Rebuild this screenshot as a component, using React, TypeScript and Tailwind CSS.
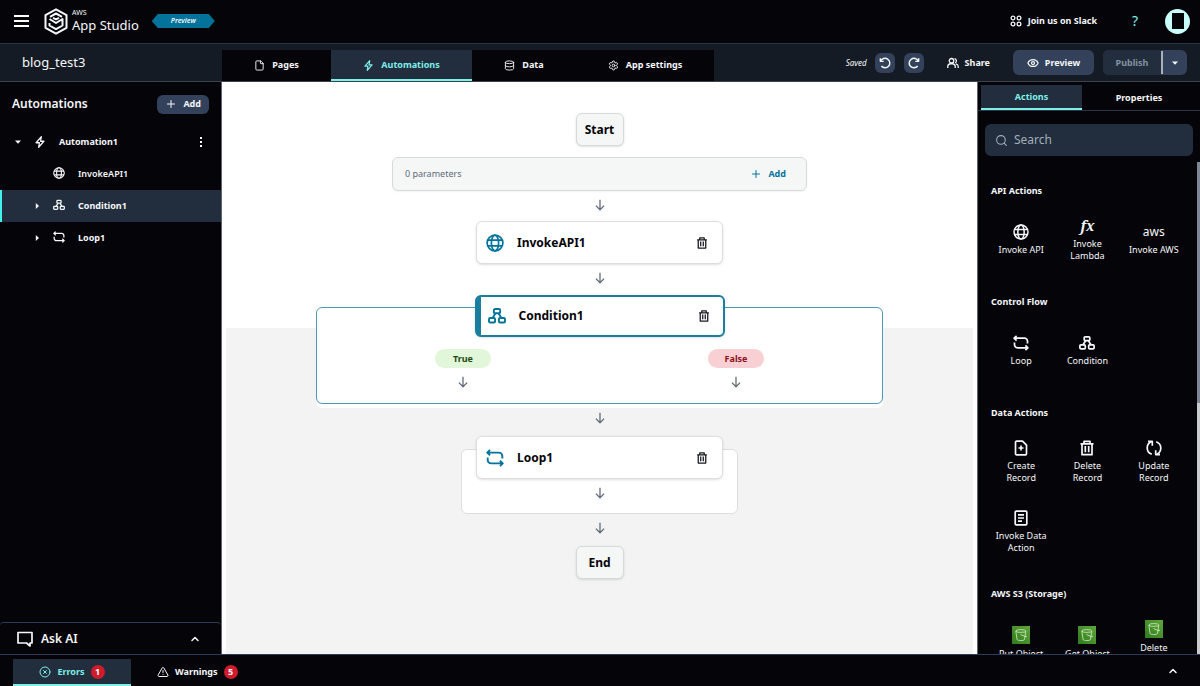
import type { ReactNode } from "react"
import { ChevronUp, CircleX, Database, Eye, File, Plus, Search, Settings, TriangleAlert, Zap } from "lucide-react"

type IconProps = { className?: string }

function Svg({ className = "size-4", width = 1.7, children }: IconProps & { width?: number; children: ReactNode }) {
  return (
    <svg
      viewBox="0 0 16 16"
      fill="none"
      stroke="currentColor"
      strokeWidth={width}
      strokeLinejoin="round"
      className={`shrink-0 ${className}`}
      aria-hidden="true"
    >
      {children}
    </svg>
  )
}

const GlobeIcon = ({ className }: IconProps) => (
  <Svg className={className} width={1.5}>
    <circle cx="8" cy="8" r="7" />
    <ellipse cx="8" cy="8" rx="3.2" ry="7" />
    <path d="M1.5 5.5h13M1.5 10.5h13" />
  </Svg>
)

const ConditionIcon = ({ className }: IconProps) => (
  <Svg className={className}>
    <rect x="5.2" y="1.8" width="5.6" height="3.8" rx="1" />
    <rect x="0.9" y="9.8" width="5.4" height="4" rx="1" />
    <rect x="9.7" y="9.8" width="5.4" height="4" rx="1" />
    <path d="M6.6 5.8 4 9.8M9.4 5.8 12 9.8" />
  </Svg>
)

const LoopIcon = ({ className }: IconProps) => (
  <Svg className={className}>
    <path d="M1 3.2h10.500a3 3 0 0 1 3 3v2.300M3.600.800 1.100 3.200l2.500 2.400" />
    <path d="M1.500 7.500v2.300a3 3 0 0 0 3 3H15M12.400 10.400l2.500 2.400-2.500 2.400" />
  </Svg>
)

const TrashIcon = ({ className }: IconProps) => (
  <Svg className={className}>
    <path d="M1.500 3.800h13M5 3.500V1.300h6v2.200M3 3.800v10.900h10V3.800M6.300 6v6.200M9.700 6v6.200" />
  </Svg>
)

const CreateIcon = ({ className }: IconProps) => (
  <Svg className={className}>
    <path d="M2.500 2.200a1 1 0 0 1 1-1h6l4 4v8.600a1 1 0 0 1-1 1h-9a1 1 0 0 1-1-1zM8 5.500v5M5.500 8h5" />
  </Svg>
)

const UpdateIcon = ({ className }: IconProps) => (
  <Svg className={className}>
    <path d="M5.800 14.300C3 13.300 1.200 11 1.200 8c0-2.600 1.300-4.900 3.800-6.200M2 1.400h4.300v4.300" />
    <path d="M10.200 1.700C13 2.700 14.800 5 14.800 8c0 2.600-1.300 4.900-3.800 6.200M14 14.600H9.700v-4.300" />
  </Svg>
)

const DocumentIcon = ({ className }: IconProps) => (
  <Svg className={className}>
    <rect x="2.2" y="1.2" width="11.6" height="13.6" rx="1" />
    <path d="M5 4.800h6M5 8h6M5 11.200h4" />
  </Svg>
)

const UsersIcon = ({ className }: IconProps) => (
  <Svg className={className}>
    <circle cx="6" cy="5" r="3" />
    <path d="M1 14.500v-1.500a4 4 0 0 1 4-4h2a4 4 0 0 1 4 4v1.500M10 2.200a3 3 0 0 1 .800 5.700M12 9.200a4 4 0 0 1 3 3.800v1.500" />
  </Svg>
)

const SlackIcon = ({ className }: IconProps) => (
  <Svg className={className}>
    <circle cx="4" cy="4" r="2.5" />
    <circle cx="12" cy="4" r="2.5" />
    <circle cx="4" cy="12" r="2.5" />
    <circle cx="12" cy="12" r="2.5" />
  </Svg>
)

const UndoIcon = ({ className }: IconProps) => (
  <Svg className={className} width={1.9}>
    <path d="M1.800 1.500v4.300h4.500M2.300 5.600A6.300 6.300 0 1 1 3.200 12" />
  </Svg>
)

const BoltIcon = ({ className }: IconProps) => (
  <Svg className={className}>
    <path d="M9.800 1 2.800 9h4.400L6.200 15l7-8H8.800z" />
  </Svg>
)

const ChatIcon = ({ className }: IconProps) => (
  <Svg className={className}>
    <path d="M1 1.500h14v10.500h-2v3l-3.500-3H1z" />
  </Svg>
)

const BucketIcon = () => (
  <svg viewBox="0 0 18 18" fill="none" stroke="#d6ecc4" strokeWidth="0.8" className="size-[18px] bg-linear-to-tr from-[#2f7a1c] to-[#5fa83c]" aria-hidden="true">
    <ellipse cx="8.8" cy="5" rx="5" ry="1.4" />
    <path d="M3.800 5l1.300 8.500c.3 1.400 7.100 1.400 7.400 0L13.800 5M8.500 8.500l4.500 2c1.500.6 2.200.1.800-.9" />
  </svg>
)

const FxIcon = () => (
  <span className="font-['Noto_Serif','Liberation_Serif',serif] text-sm leading-4 font-bold italic">fx</span>
)

const AwsIcon = () => <span className="text-xs leading-4">aws</span>

const LogoIcon = () => (
  <svg viewBox="0 0 24 27" fill="none" stroke="currentColor" strokeWidth="2" strokeLinejoin="round" className="h-[27px] w-6" aria-hidden="true">
    <path d="M12 1.300 22.500 7.200v12.600L12 25.700 1.500 19.800V7.200z" />
    <path d="M6 8.800 12 5.500l6 3.300M9 9.800l3 1.500 3-1.500" />
    <path d="M5.500 11l6.500 4 6.500-4v6.500L12 21.200l-6.500-3.700v-2.500" />
  </svg>
)

const Caret = ({ open }: { open?: boolean }) => (
  <svg viewBox="0 0 12 12" fill="currentColor" className="size-3 shrink-0" aria-hidden="true">
    {open ? <path d="M3 4.500h6L6 7.800z" /> : <path d="M4.800 3v6L8 6z" />}
  </svg>
)

function Arrow({ className = "h-8" }: IconProps) {
  return (
    <div className={`flex justify-center pt-2 text-[#5f6b7a] ${className}`}>
      <Svg className="size-3">
        <path d="M8 1v13M2.500 8.800 8 14.300l5.500-5.500" />
      </Svg>
    </div>
  )
}

const tabs = [
  { icon: File, label: "Pages", size: "w-[109px]" },
  { icon: BoltIcon, label: "Automations", size: "w-[141px]", active: true },
  { icon: Database, label: "Data", size: "w-[104px]" },
  { icon: Settings, label: "App settings", size: "w-[138px]" },
]

const tree = [
  { label: "InvokeAPI1", icon: GlobeIcon },
  { label: "Condition1", icon: ConditionIcon, expandable: true, selected: true },
  { label: "Loop1", icon: LoopIcon, expandable: true },
]

const sections = [
  {
    title: "API Actions",
    items: [
      { label: "Invoke API", icon: GlobeIcon },
      { label: "Invoke Lambda", icon: FxIcon },
      { label: "Invoke AWS", icon: AwsIcon },
    ],
  },
  {
    title: "Control Flow",
    items: [
      { label: "Loop", icon: LoopIcon },
      { label: "Condition", icon: ConditionIcon },
    ],
  },
  {
    title: "Data Actions",
    items: [
      { label: "Create Record", icon: CreateIcon },
      { label: "Delete Record", icon: TrashIcon },
      { label: "Update Record", icon: UpdateIcon },
      { label: "Invoke Data Action", icon: DocumentIcon },
    ],
  },
  {
    title: "AWS S3 (Storage)",
    items: [
      { label: "Put Object", icon: BucketIcon },
      { label: "Get Object", icon: BucketIcon },
      { label: "Delete Object", icon: BucketIcon },
    ],
  },
]

function Header() {
  return (
    <header className="flex h-11 shrink-0 items-center border-b border-[#2a3646] pr-[10px] pb-px pl-[14px]">
      <button aria-label="Menu" className="flex w-[15px] flex-col gap-[3px]">
        <span className="h-[2px] bg-white" />
        <span className="h-[2px] bg-white" />
        <span className="h-[2px] bg-white" />
      </button>
      <a href="#" className="ml-[15px] flex items-center gap-1">
        <LogoIcon />
        <span className="flex flex-col">
          <span className="text-[7px] leading-2">AWS</span>
          <span className="text-[13px] leading-[17px]">App Studio</span>
        </span>
      </a>
      <span className="ml-[13px] flex h-[14px] w-[63px] items-center justify-center bg-[#04739b] text-[7px] font-semibold italic [clip-path:polygon(6px_0,calc(100%-6px)_0,100%_50%,calc(100%-6px)_100%,6px_100%,0_50%)]">
        Preview
      </span>
      <a href="#" className="ml-auto flex items-center gap-[6px] font-bold">
        <SlackIcon className="size-3" />
        Join us on Slack
      </a>
      <button aria-label="Help" className="ml-8 w-3 text-sm text-[#7df0ea]">
        ?
      </button>
      <button aria-label="Account" className="ml-6 flex size-[25px] items-center justify-center rounded-full bg-[#c8fffb]">
        <span className="h-4 w-3 bg-[#050509]" />
      </button>
    </header>
  )
}

function Toolbar() {
  return (
    <div className="flex h-[38px] shrink-0 items-center border-b border-[#3b434d] bg-[#151b24] pr-[13px]">
      <h1 className="w-[222px] pl-[22px] text-[13px]">blog_test3</h1>
      <nav className="flex self-end">
        {tabs.map((tab) => (
          <button
            key={tab.label}
            className={`flex h-[31px] items-center justify-center gap-[7px] border-b-2 pt-px font-bold ${tab.size} ${
              tab.active ? "border-[#7df0ea] bg-[#222e3d] text-[#7df0ea]" : "border-[#050509] bg-[#050509]"
            }`}
          >
            <tab.icon className="size-[11px]" />
            {tab.label}
          </button>
        ))}
      </nav>
      <span className="ml-auto text-[8px] italic">Saved</span>
      <button aria-label="Undo" className="ml-2 flex size-5 items-center justify-center rounded-md bg-[#33425a]">
        <UndoIcon className="size-3" />
      </button>
      <button aria-label="Redo" className="ml-[9px] flex size-5 items-center justify-center rounded-md bg-[#33425a]">
        <UndoIcon className="size-3 -scale-x-100" />
      </button>
      <button className="ml-[23px] flex items-center gap-[6px] font-bold">
        <UsersIcon className="size-3" />
        Share
      </button>
      <button className="ml-[23px] flex h-[25px] w-[81px] items-center justify-center gap-[6px] rounded-md bg-[#33425a] font-bold">
        <Eye className="size-3" strokeWidth={2.5} />
        Preview
      </button>
      <div className="ml-[9px] flex h-[25px] overflow-hidden rounded-md bg-[#33425a]">
        <button className="w-[58px] bg-[#222e3d] font-bold text-[#8391a2]">Publish</button>
        <span className="my-px w-[2px] bg-[#a9b0b8]" />
        <button aria-label="Publish options" className="flex w-6 items-center justify-center">
          <Caret open />
        </button>
      </div>
    </div>
  )
}

function Sidebar() {
  return (
    <aside className="flex w-[222px] shrink-0 flex-col border-r border-[#5f6570]">
      <div className="flex h-11 items-center justify-between pr-3 pl-3">
        <h2 className="text-xs font-semibold">Automations</h2>
        <button className="flex h-[19px] items-center gap-[6px] rounded-md bg-[#33425a] px-2 font-bold">
          <Plus className="size-3" />
          Add
        </button>
      </div>
      <div className="flex h-8 items-center pr-[15px] pl-3">
        <Caret open />
        <BoltIcon className="ml-[10px] size-3" />
        <span className="ml-[13px] font-bold">Automation1</span>
        <button aria-label="More" className="ml-auto flex w-[10px] flex-col items-center gap-[2px]">
          <span className="size-[2px] bg-white" />
          <span className="size-[2px] bg-white" />
          <span className="size-[2px] bg-white" />
        </button>
      </div>
      {tree.map((node) => (
        <div
          key={node.label}
          className={`flex h-8 items-center border-l-2 pl-[29px] ${
            node.selected ? "border-[#42f2ea] bg-[#222e3d]" : "border-transparent"
          } ${node.expandable ? "font-bold" : "font-semibold"}`}
        >
          <span className="size-3">{node.expandable && <Caret />}</span>
          <node.icon className="mb-[2px] ml-[10px] size-3" />
          <span className="ml-[13px]">{node.label}</span>
        </div>
      ))}
      <button className="mt-auto flex h-8 items-center gap-2 rounded-t border-t border-[#2a3f57] pr-5 pl-[17px] text-xs font-semibold">
        <ChatIcon className="size-4" />
        Ask AI
        <ChevronUp className="ml-auto size-3" strokeWidth={3} />
      </button>
    </aside>
  )
}

function StepCard({ icon: Icon, label, selected }: { icon: (p: IconProps) => ReactNode; label: string; selected?: boolean }) {
  return (
    <div
      className={`flex items-center rounded-md bg-white text-xs font-bold shadow-sm ${
        selected
          ? "h-[42px] w-[250px] border-2 border-l-6 border-[#1a7f9f] pr-[13px] pl-[7px]"
          : "h-[43px] w-[247px] border border-[#dcdfe1] pr-[14px] pl-[9px]"
      }`}
    >
      <Icon className="size-[18px] text-[#04739b]" />
      <span className="ml-[13px]">{label}</span>
      <button aria-label={`Delete ${label}`} className="ml-auto text-[#16191f]">
        <TrashIcon className="size-3" />
      </button>
    </div>
  )
}

function Terminal({ label }: { label: string }) {
  return (
    <div className="flex h-[33px] w-12 items-center justify-center rounded-md border border-[#d5dbdb] bg-[#f5f7f7] text-xs font-bold shadow">
      {label}
    </div>
  )
}

function Canvas() {
  return (
    <main className="min-w-0 flex-1 overflow-hidden bg-white px-1 text-[#050509]">
      <div className="flex h-full flex-col items-center bg-[linear-gradient(#fff_246px,#f3f3f3_246px)] pt-[31px]">
        <Terminal label="Start" />
        <div className="mt-[11px] flex h-[34px] w-[415px] items-center justify-between rounded-md border border-[#d5dbdb] bg-[#f5f7f7] pr-5 pl-3 shadow-xs">
          <span className="text-[#5f6b7a]">0 parameters</span>
          <button className="flex items-center gap-[6px] font-bold text-[#04739b]">
            <Plus className="size-3" />
            Add
          </button>
        </div>
        <Arrow className="h-[30px]" />
        <StepCard icon={GlobeIcon} label="InvokeAPI1" />
        <Arrow className="h-[31px]" />
        <div className="mt-3 flex w-[567px] flex-col items-center rounded-md border border-[#4c9bb4] bg-white pb-1 shadow-[0_4px_0_#fff]">
          <div className="-mt-[13px]">
            <StepCard icon={ConditionIcon} label="Condition1" selected />
          </div>
          <div className="mt-3 flex">
            <div className="w-[273px]">
              <p className="mx-auto h-[19px] w-14 rounded-full bg-[#e2f6da] text-center leading-[19px] font-bold text-[#1d4a12]">True</p>
              <Arrow className="h-[31px]" />
            </div>
            <div className="w-[273px]">
              <p className="mx-auto h-[19px] w-14 rounded-full bg-[#f8d0d3] text-center leading-[19px] font-bold text-[#8c1020]">False</p>
              <Arrow className="h-[31px]" />
            </div>
          </div>
        </div>
        <Arrow />
        <div className="mt-[13px] flex w-[277px] flex-col items-center rounded-md border border-[#dcdfe1] bg-white">
          <div className="-mt-[14px]">
            <StepCard icon={LoopIcon} label="Loop1" />
          </div>
          <Arrow className="h-[34px]" />
        </div>
        <Arrow />
        <Terminal label="End" />
      </div>
    </main>
  )
}

function ActionsPanel() {
  return (
    <aside className="flex w-[223px] shrink-0 flex-col border-l border-[#5f6570]">
      <div className="flex border-b border-[#2a3646] pt-[3px] pr-1 pl-[3px] font-bold">
        <button className="h-[25px] w-[101px] border-b-2 border-[#7df0ea] bg-[#222e3d] text-[#7df0ea]">Actions</button>
        <button className="h-[25px] flex-1">Properties</button>
      </div>
      <label className="mx-[7px] mt-[13px] flex h-8 shrink-0 items-center gap-[6px] rounded-md bg-[#222e3d] px-[10px] text-[#a3adb9]">
        <Search className="size-[13px] shrink-0" />
        <input type="search" aria-label="Search" placeholder="Search" className="min-w-0 flex-1 bg-transparent text-xs placeholder:text-[#a3adb9]" />
      </label>
      <div className="mt-[6px] flex min-h-0 flex-1">
        <div className="flex min-w-0 flex-1 flex-col gap-[21px] overflow-hidden pt-[23px] pr-[10px] pl-[10px]">
          {sections.map((section) => (
            <section key={section.title} className="shrink-0">
              <h3 className="mb-2 pl-[3px] leading-3 font-bold">{section.title}</h3>
              <div className="grid grid-cols-3">
                {section.items.map((item) => (
                  <button key={item.label} className="flex h-[70px] flex-col items-center justify-center gap-1 px-[6px] leading-3">
                    <item.icon />
                    {item.label}
                  </button>
                ))}
              </div>
            </section>
          ))}
        </div>
        <div className="w-[3px] bg-[#c9cbce]">
          <div className="h-[49%] bg-[#7d8795]" />
        </div>
      </div>
    </aside>
  )
}

function Footer() {
  return (
    <footer className="flex h-8 shrink-0 items-end border-t border-[#2a3f57] pr-[21px] pl-[13px] font-bold">
      <button className="flex h-[27px] w-[118px] items-center justify-center gap-[6px] border-b-2 border-[#7df0ea] bg-[#222e3d] text-[#7df0ea]">
        <CircleX className="size-3" />
        Errors
        <span className="size-[14px] rounded-full bg-[#d01b2c] text-center leading-[14px] text-white">1</span>
      </button>
      <button className="flex h-[27px] items-center gap-[6px] border-b-2 border-transparent pl-[26px]">
        <TriangleAlert className="size-3" />
        Warnings
        <span className="size-[14px] rounded-full bg-[#d01b2c] text-center leading-[14px]">5</span>
      </button>
      <button aria-label="Expand" className="ml-auto self-center">
        <ChevronUp className="size-3" strokeWidth={3} />
      </button>
    </footer>
  )
}

export default function App() {
  return (
    <div className="flex h-screen flex-col bg-[#050509] font-['Noto_Sans','Open_Sans',sans-serif] text-[9px] text-[#f5f7f9]">
      <Header />
      <Toolbar />
      <div className="flex min-h-0 flex-1">
        <Sidebar />
        <Canvas />
        <ActionsPanel />
      </div>
      <Footer />
    </div>
  )
}
